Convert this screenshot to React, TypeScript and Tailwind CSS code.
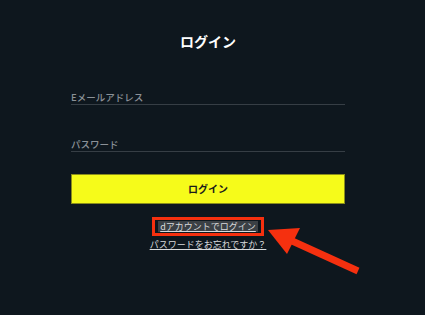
import React from 'react';

const font = { fontFamily: '"Noto Sans CJK JP", "Noto Sans", sans-serif' };

export default function App() {
  return (
    <div className="relative w-[425px] h-[315px] overflow-hidden bg-[#0e171e]" style={font}>
      <div className="ml-[71px] w-[274px] flex flex-col">
        <h1 className="mt-[30px] h-[22px] text-center text-[14px] leading-[22px] font-bold text-white">ログイン</h1>

        {/* Email */}
        <div className="mt-[39px] border-b border-[#363e45] h-[14px] text-[9.5px] leading-[12px] font-medium text-[#8b9197]">
          Eメールアドレス
        </div>

        {/* Password */}
        <div className="mt-[33px] border-b border-[#363e45] h-[14px] text-[9.5px] leading-[12px] font-medium text-[#8b9197]">
          パスワード
        </div>

        <button className="mt-[22px] h-[30px] bg-[#f6fb1a] border border-[#8a8d1a] text-[10px] leading-[26px] font-bold text-[#1a1a1a]">
          ログイン
        </button>

        <div className="mt-[13px] flex flex-col items-center">
          <div className="flex h-[19px] items-center border-[3px] border-[#f5300f] px-[3px]">
            <span className="bg-[#3b4045] px-[2px] text-[9px] leading-[11px] text-[#d8dadc] underline underline-offset-[1px]">
              dアカウントでログイン
            </span>
          </div>
          <a className="mt-[2px] text-[9px] leading-[13px] text-[#d8dadc] underline underline-offset-[1px]">
            パスワードをお忘れですか？
          </a>
        </div>
      </div>

      {/* Arrow annotation */}
      <svg className="absolute left-0 top-0" width="425" height="315" viewBox="0 0 425 315">
        <line x1="358" y1="271" x2="290" y2="240" stroke="#f5300f" strokeWidth="7" />
        <polygon points="268,230 300,228 287,254" fill="#f5300f" />
      </svg>
    </div>
  );
}
